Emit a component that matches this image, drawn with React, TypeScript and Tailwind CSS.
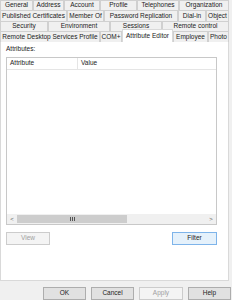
import React from "react";

type T = { label: string; w: number; sel?: boolean };

const rows: { h: number; tabs: T[] }[] = [
  {
    h: 10,
    tabs: [
      { label: "General", w: 33 },
      { label: "Address", w: 31 },
      { label: "Account", w: 36 },
      { label: "Profile", w: 37 },
      { label: "Telephones", w: 42 },
      { label: "Organization", w: 50 },
    ],
  },
  {
    h: 11,
    tabs: [
      { label: "Published Certificates", w: 67 },
      { label: "Member Of", w: 37 },
      { label: "Password Replication", w: 74 },
      { label: "Dial-in", w: 28 },
      { label: "Object", w: 23 },
    ],
  },
  {
    h: 10,
    tabs: [
      { label: "Security", w: 48 },
      { label: "Environment", w: 62 },
      { label: "Sessions", w: 52 },
      { label: "Remote control", w: 67 },
    ],
  },
  {
    h: 11,
    tabs: [
      { label: "Remote Desktop Services Profile", w: 100 },
      { label: "COM+", w: 22 },
      { label: "Attribute Editor", w: 51, sel: true },
      { label: "Employee", w: 35 },
      { label: "Photo", w: 21 },
    ],
  },
];

function Btn({ label, w, disabled, focus }: { label: string; w: number; disabled?: boolean; focus?: boolean }) {
  const base = "flex items-center justify-center h-[13px] border text-[6.5px] leading-none";
  const cls = disabled
    ? "border-[#cccccc] bg-[#f4f4f4] text-[#a0a0a0]"
    : focus
    ? "border-[#7eb4ea] bg-[#e5f1fb] text-[#222]"
    : "border-[#adadad] bg-[#e1e1e1] text-[#222]";
  return (
    <div className={`${base} ${cls}`} style={{ width: w }}>
      {label}
    </div>
  );
}

export default function App() {
  return (
    <div
      className="w-[232px] h-[300px] bg-[#f0f0f0] overflow-hidden text-[#222] flex flex-col"
      style={{ fontFamily: '"Liberation Sans", Arial, sans-serif' }}
    >
      <div className="flex flex-col w-[229px]">
        {rows.map((r, i) => (
          <div key={i} className="flex items-end" style={{ height: r.h }}>
            {r.tabs.map((t) =>
              t.sel ? (
                <div
                  key={t.label}
                  className="relative z-10 h-[13px] flex items-center justify-center bg-white border-t border-l border-r border-[#d9d9d9] text-[6.5px] leading-none shrink-0"
                  style={{ width: t.w }}
                >
                  {t.label}
                </div>
              ) : (
                <div
                  key={t.label}
                  className="h-full flex items-center justify-center bg-[#f0f0f0] border-t border-l border-r border-[#d0d0d0] text-[6.5px] leading-none whitespace-nowrap shrink-0"
                  style={{ width: t.w }}
                >
                  {t.label}
                </div>
              )
            )}
          </div>
        ))}
      </div>

      <div className="w-[229px] h-[240px] bg-white border border-t-0 border-[#d9d9d9] flex flex-col pl-[5px] pr-[11px]">
        <div className="h-[15px] flex items-center text-[6.5px] leading-none">Attributes:</div>
        <div className="h-[168px] border border-[#c8c8c8] flex flex-col">
          <div className="h-[12px] flex border-b border-[#e5e5e5] text-[6.5px] leading-none">
            <div className="w-[71px] border-r border-[#e5e5e5] flex items-center pl-[3px]">Attribute</div>
            <div className="flex-1 flex items-center pl-[3px]">Value</div>
          </div>
          <div className="flex-1" />
          <div className="h-[10px] bg-[#f0f0f0] flex items-center text-[6px] text-[#606060]">
            <div className="w-[10px] h-full flex items-center justify-center">&lt;</div>
            <div className="w-[110px] h-[8px] bg-[#cdcdcd] flex items-center justify-center gap-[1px]">
              <div className="w-px h-[4px] bg-[#555]" />
              <div className="w-px h-[4px] bg-[#555]" />
              <div className="w-px h-[4px] bg-[#555]" />
            </div>
            <div className="flex-1" />
            <div className="w-[10px] h-full flex items-center justify-center">&gt;</div>
          </div>
        </div>
        <div className="flex justify-between mt-[7px]">
          <Btn label="View" w={44} disabled />
          <Btn label="Filter" w={45} focus />
        </div>
      </div>

      <div className="flex justify-end gap-[5px] pt-[6px] pr-[1px]">
        <Btn label="OK" w={43} />
        <Btn label="Cancel" w={43} />
        <Btn label="Apply" w={44} disabled />
        <Btn label="Help" w={43} />
      </div>
    </div>
  );
}
